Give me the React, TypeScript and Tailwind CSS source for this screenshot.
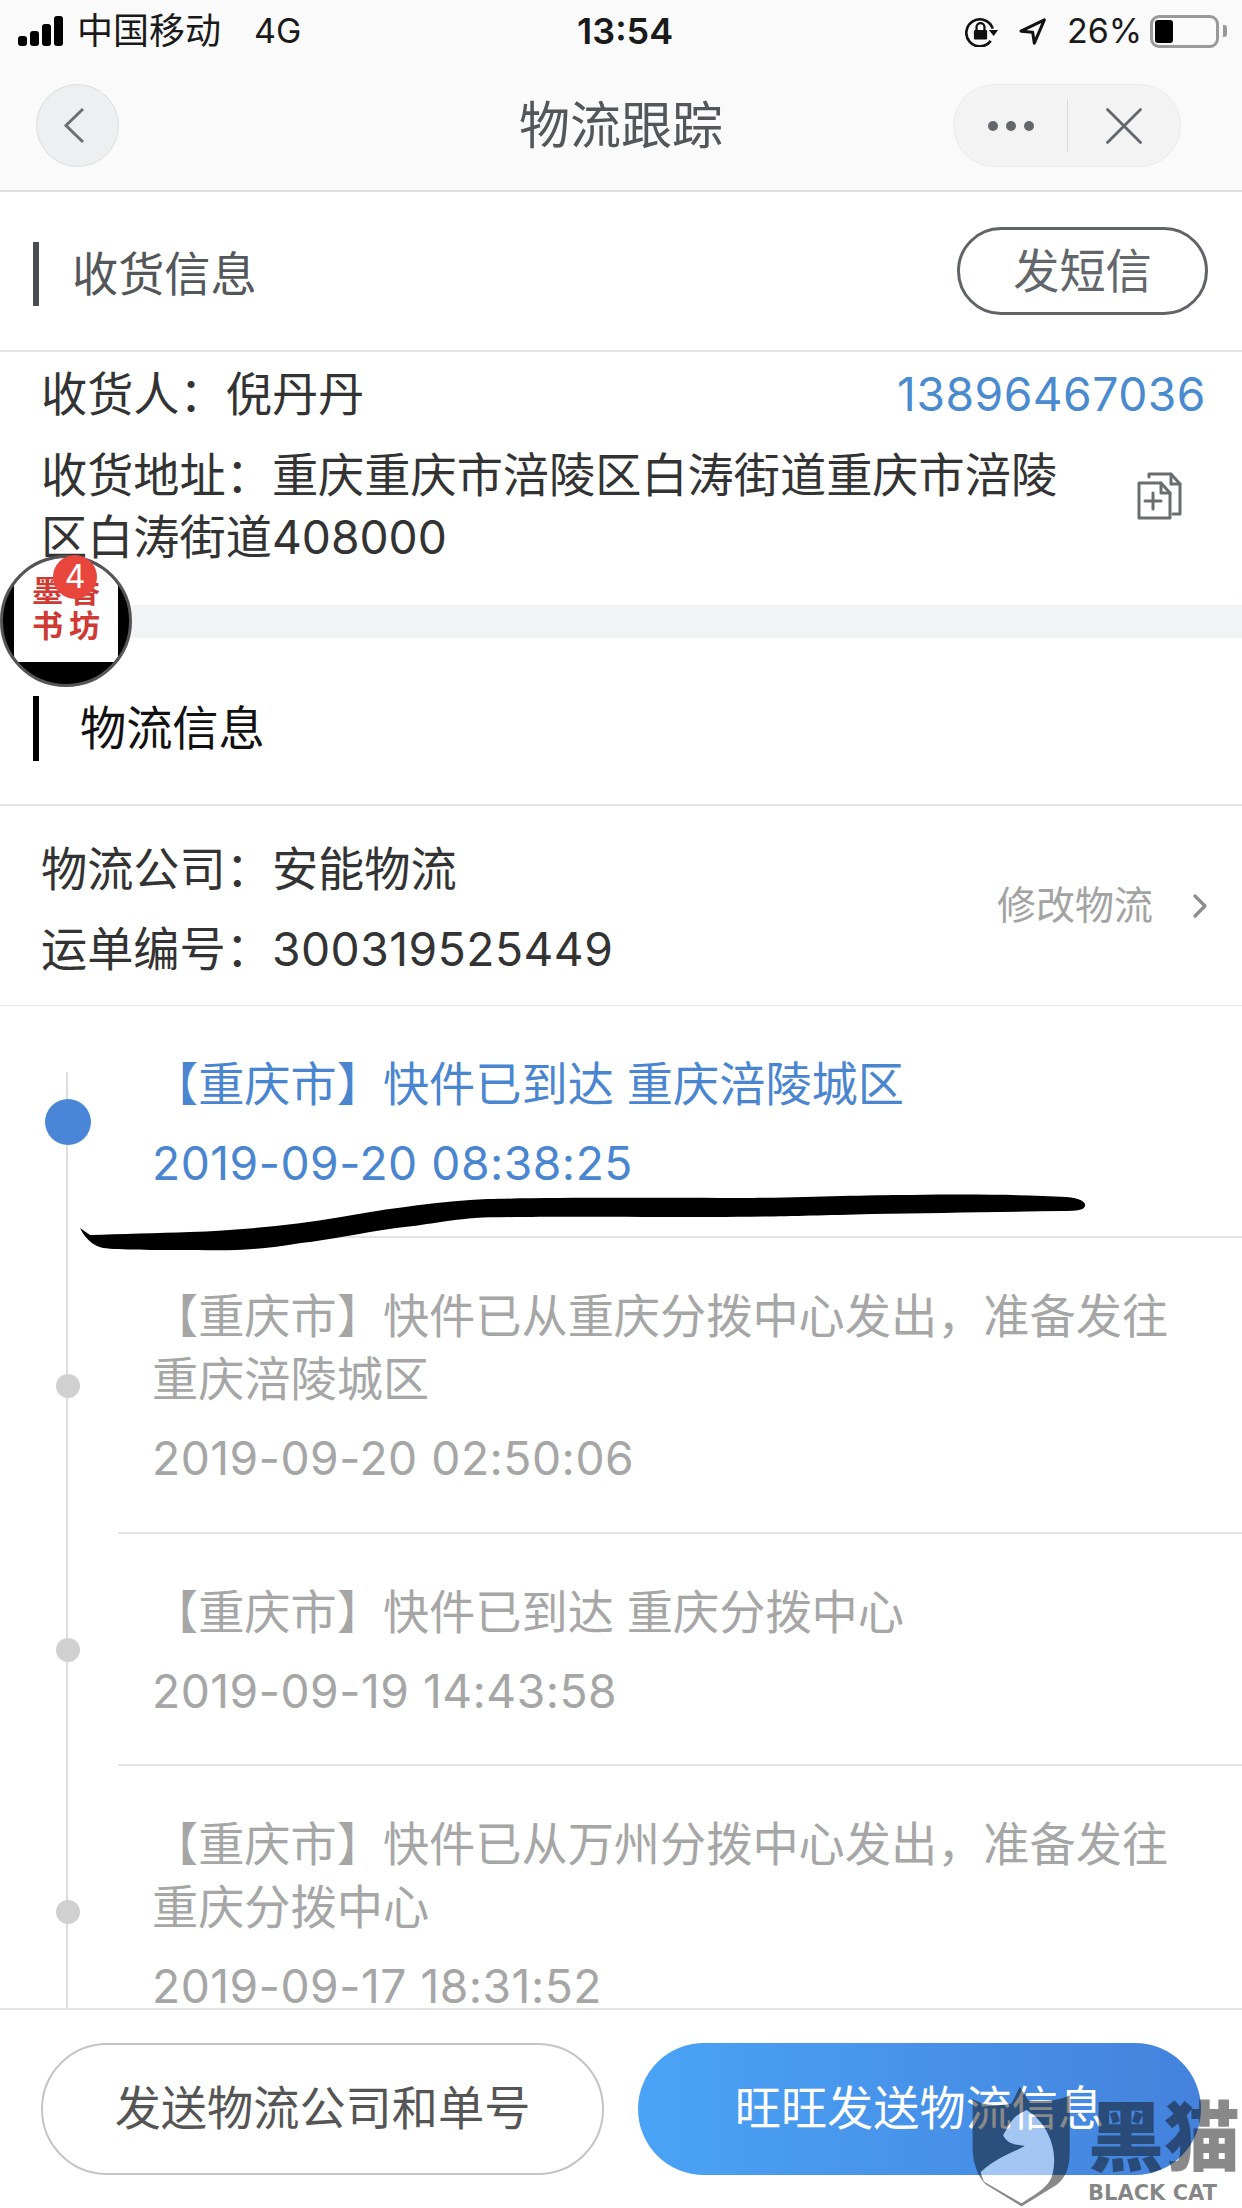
import { ChevronRight, X } from 'lucide-react';

const items = [
  { h: 'h-[232px]', lines: ['【重庆市】快件已到达 重庆涪陵城区'], time: '2019-09-20 08:38:25', active: true },
  { h: 'h-[296px]', lines: ['【重庆市】快件已从重庆分拨中心发出\uFF0C准备发往', '重庆涪陵城区'], time: '2019-09-20 02:50:06' },
  { h: 'h-[232px]', lines: ['【重庆市】快件已到达 重庆分拨中心'], time: '2019-09-19 14:43:58' },
  { h: 'h-[292px]', lines: ['【重庆市】快件已从万州分拨中心发出\uFF0C准备发往', '重庆分拨中心'], time: '2019-09-17 18:31:52' },
];

function StatusBar() {
  return (
    <div className="flex h-[62px] items-center text-[36px] leading-none text-[#1a1a1a]">
      <div className="ml-[18px] flex h-[30px] w-[48px] items-end gap-[3px]">
        <div className="h-[10px] w-[9px] rounded-[3px] bg-black" />
        <div className="h-[15px] w-[9px] rounded-[3px] bg-black" />
        <div className="h-[22px] w-[9px] rounded-[3px] bg-black" />
        <div className="h-[30px] w-[9px] rounded-[3px] bg-black" />
      </div>
      <span className="ml-[11px] w-[177px] whitespace-nowrap">中国移动</span>
      <span className="w-[323px] text-[34px]">4G</span>
      <span className="w-[388px] text-[36px] font-semibold">13:54</span>
      {/* orientation lock */}
      <svg viewBox="0 0 100 93" className="h-[31px] w-[33px]" fill="none" stroke="#111" strokeWidth="8">
        <path d="M78 75A41 41 0 1 1 84 38" />
        <path d="M100 42L72 42L87 60Z" fill="#111" stroke="none" />
        <rect x="27" y="42" width="40" height="29" rx="4" fill="#111" stroke="none" />
        <path d="M35 44V33a12 12 0 0 1 24 0V44" strokeWidth="7" />
      </svg>
      {/* location arrow */}
      <svg viewBox="0 0 81 80" className="ml-[21px] h-[27px] w-[27px]" fill="none" stroke="#111" strokeWidth="9" strokeLinejoin="round">
        <path d="M76 5L6 39L41 42L46 75Z" />
      </svg>
      <span className="ml-[21px] w-[83px] whitespace-nowrap text-[34px]">26%</span>
      <div className="h-[33px] w-[69px] rounded-[9px] border-[3px] border-[#999] p-[2px]">
        <div className="h-full w-[18px] rounded-[3px] bg-black" />
      </div>
      <div className="ml-[4px] h-[12px] w-[4px] rounded-r-[3px] bg-[#999]" />
    </div>
  );
}

function NavBar() {
  return (
    <div className="grid h-[128px] grid-cols-[1fr_auto_1fr] items-start px-[36px] pt-[22px]">
      <div className="flex h-[83px] w-[83px] items-center justify-center rounded-full border border-[#ddd] bg-[#eeeff0] pr-[8px]">
        <svg viewBox="0 0 22 37" className="h-[37px] w-[22px]" fill="none" stroke="#6b6f73" strokeWidth="3">
          <path d="M20 2L3 18.5L20 35" />
        </svg>
      </div>
      <div className="text-[51px] leading-[83px] text-[#53575a]">物流跟踪</div>
      <div className="mr-[25px] flex h-[83px] w-[228px] items-center justify-self-end rounded-full border border-[#eaeaea] bg-[#f3f3f4]">
        <div className="flex w-[113px] justify-center gap-[8px]">
          <div className="h-[10px] w-[10px] rounded-full bg-[#63676b]" />
          <div className="h-[10px] w-[10px] rounded-full bg-[#63676b]" />
          <div className="h-[10px] w-[10px] rounded-full bg-[#63676b]" />
        </div>
        <div className="h-[53px] w-[1px] bg-[#d8d8d8]" />
        <div className="flex flex-1 justify-center">
          <X size={66} strokeWidth={1} className="text-[#63676b]" />
        </div>
      </div>
    </div>
  );
}

function CopyIcon() {
  return (
    <svg viewBox="0 0 48 48" className="h-[48px] w-[48px]" fill="none" stroke="#6b6e71" strokeWidth="3" strokeLinecap="round" strokeLinejoin="round">
      <path d="M13 5V2h22l9 10v30h-7" />
      <path d="M35 2v10h9" />
      <path d="M3 11h22l9 10v25H3z" />
      <path d="M25 11v10h9" />
      <path d="M9 29h16M17 21v16" />
    </svg>
  );
}

function Avatar() {
  return (
    <div className="absolute left-0 top-[555px] h-[132px] w-[132px]">
      <div className="h-full w-full overflow-hidden rounded-full border-[3px] border-[#555] bg-black">
        <div className="ml-[11px] flex h-[104px] w-[104px] flex-col items-center bg-white pl-[6px] pt-[16px] font-['Liberation_Serif','Noto_Sans_CJK_SC',serif] text-[31px] font-bold leading-[35px] text-[#cf3a34]">
          <span className="tracking-[6px]">墨香</span>
          <span className="tracking-[6px]">书坊</span>
        </div>
      </div>
      <div className="absolute left-[53px] top-0 flex h-[44px] w-[44px] items-center justify-center rounded-full bg-[#e8453c] text-[32px] leading-none text-white">
        4
      </div>
    </div>
  );
}

function Scribble() {
  return (
    <svg viewBox="0 0 1242 2208" className="pointer-events-none absolute left-0 top-0 h-[2208px] w-[1242px]">
      <path
        fill="#000"
        d="M80 1228L90 1235C120 1234 158 1233 190 1232C238 1230 290 1226 341 1217C380 1210 420 1204 470 1200C520 1197 640 1198 753 1198C820 1197 860 1195 911 1195C980 1194 1030 1195 1066 1197C1082 1198 1086 1203 1085 1206C1084 1210 1078 1211 1062 1211C1000 1212 930 1213 872 1214C800 1216 760 1217 713 1217C620 1217 520 1216 475 1218C440 1221 420 1226 396 1228C360 1233 330 1240 301 1243C260 1250 230 1251 198 1250C150 1250 120 1250 103 1248C94 1246 86 1240 80 1228Z"
      />
    </svg>
  );
}

const catShape =
  'M170 92C150 110 140 135 130 150C140 175 165 180 195 182C170 200 110 215 62 262L72 290L185 355C260 310 275 290 280 260C295 190 260 110 200 75Z';

function Watermark() {
  return (
    <div className="pointer-events-none absolute bottom-0 right-0 flex h-[123px] w-[282px]">
      <svg viewBox="0 0 340 369" className="h-[123px] w-[113px] shrink-0">
        <path
          fill="rgba(14,14,14,0.49)"
          fillRule="evenodd"
          d={`M38 42C70 60 115 65 155 55L180 5L205 45C240 50 290 50 330 30L330 200C330 260 310 285 290 300L185 365L80 300C55 280 42 240 38 200Z${catShape}`}
        />
        <path fill="rgba(255,255,255,0.5)" d={catShape} />
      </svg>
      <div className="ml-[15px] flex flex-col pt-[14px]">
        <span className="whitespace-nowrap text-[76px] font-black leading-[76px] text-[rgba(14,14,14,0.49)]">黑猫</span>
        <span className="mt-[9px] whitespace-nowrap font-['DejaVu_Sans',sans-serif] text-[21px] font-bold leading-[18px] text-[rgba(14,14,14,0.5)]">
          BLACK CAT
        </span>
      </div>
    </div>
  );
}

export default function App() {
  return (
    <div className="relative flex h-[2208px] w-[1242px] flex-col overflow-hidden bg-white font-['Inter','Noto_Sans_CJK_SC',sans-serif] text-[46.2px] text-[#333]">
      {/* Top bars */}
      <div className="h-[192px] shrink-0 border-b-2 border-[#ddd] bg-[#fafafa]">
        <StatusBar />
        <NavBar />
      </div>

      {/* 收货信息 */}
      <div className="flex h-[160px] shrink-0 items-center justify-between border-b-2 border-[#e3e3e3] pl-[33px] pr-[34px]">
        <div className="mt-[6px] flex items-center">
          <div className="h-[64px] w-[6px] bg-[#4a4d52]" />
          <span className="ml-[33px] leading-none text-[#53575a]">收货信息</span>
        </div>
        <div className="flex h-[88px] w-[251px] items-center justify-center rounded-full border-[3px] border-[#606368] leading-none text-[#63676b]">
          发短信
        </div>
      </div>

      <div className="h-[253px] shrink-0 pl-[41px] pr-[36px] pt-[12px]">
        <div className="flex h-[62px] items-center justify-between">
          <span>{'收货人\uFF1A倪丹丹'}</span>
          <span className="tracking-[0.5px] text-[#4a8bd0]">13896467036</span>
        </div>
        <div className="mt-[18px] flex items-start justify-between">
          <div className="w-[1040px] leading-[62px]">{'收货地址\uFF1A重庆重庆市涪陵区白涛街道重庆市涪陵区白涛街道408000'}</div>
          <div className="mr-[22px] mt-[28px]">
            <CopyIcon />
          </div>
        </div>
      </div>

      <div className="h-[33px] shrink-0 bg-[#f2f3f5]" />

      {/* 物流信息 */}
      <div className="flex h-[168px] shrink-0 items-start border-b-2 border-[#e3e3e3] pl-[33px] pt-[58px]">
        <div className="h-[65px] w-[6px] bg-black" />
        <span className="ml-[41px] leading-[65px] text-[#111]">物流信息</span>
      </div>

      <div className="flex h-[200px] shrink-0 items-center justify-between border-b border-[#e8e8e8] pl-[41px] pr-[22px]">
        <div className="pt-[6px] leading-[80px]">
          <div>{'物流公司\uFF1A安能物流'}</div>
          <div>
            {'运单编号\uFF1A'}
            <span className="tracking-[0.5px]">300319525449</span>
          </div>
        </div>
        <div className="flex items-center text-[39px] text-[#a3a3a3]">
          修改物流
          <ChevronRight size={40} strokeWidth={2} className="ml-[27px] text-[#8d8d8d]" />
        </div>
      </div>

      {/* 时间线 */}
      <div className="relative min-h-0 flex-1 overflow-hidden">
        <div className="absolute bottom-0 left-[66px] top-[66px] w-[2px] bg-[#dcdcdc]" />
        {items.map((item) => (
          <div key={item.time} className={`flex ${item.h}`}>
            <div className="relative flex w-[118px] shrink-0 items-center justify-center pl-[18px]">
              {item.active ? (
                <div className="h-[46px] w-[46px] rounded-full bg-[#4a86d8]" />
              ) : (
                <div className="h-[24px] w-[24px] rounded-full bg-[#d0d0d0]" />
              )}
            </div>
            <div className={`flex-1 border-b-2 border-[#e3e3e3] pl-[34px] pt-[47px] ${item.active ? 'text-[#4a86cf]' : 'text-[#a6a6a6]'}`}>
              {item.lines.map((line) => (
                <div key={line} className="h-[63px] whitespace-nowrap leading-[63px]">
                  {line}
                </div>
              ))}
              <div className="mt-[16px] tracking-[0.5px] leading-[63px]">{item.time}</div>
            </div>
          </div>
        ))}
      </div>

      {/* 底部按钮 */}
      <div className="flex h-[200px] shrink-0 items-start gap-[34px] border-t-2 border-[#e3e3e3] bg-white pl-[41px] pt-[33px]">
        <div className="flex h-[132px] w-[563px] items-center justify-center rounded-full border-2 border-[#c4c4c4] text-[#555]">
          发送物流公司和单号
        </div>
        <div className="flex h-[132px] w-[563px] items-center justify-center rounded-full bg-gradient-to-r from-[#4aa3f6] to-[#4482dc] text-white">
          旺旺发送物流信息
        </div>
      </div>

      <Avatar />
      <Scribble />
      <Watermark />
    </div>
  );
}
